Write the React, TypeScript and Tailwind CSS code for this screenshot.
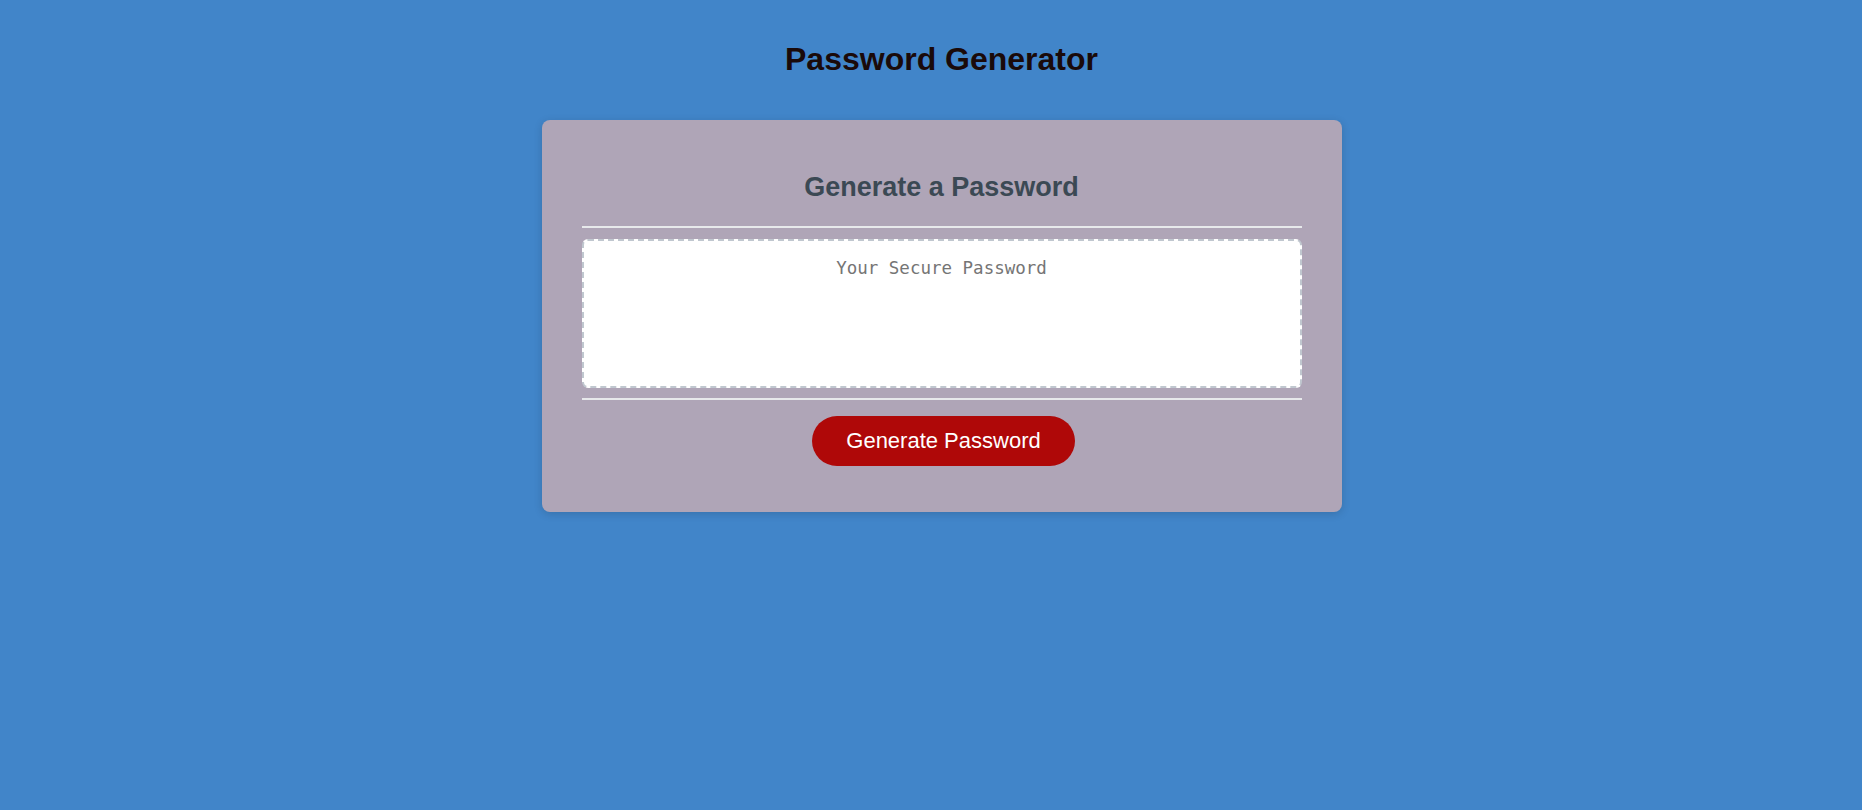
const App = () => {
  return (
    <div className="min-h-screen bg-[#4185c9] pl-[21px] pt-[41px] font-['Liberation_Sans',Arial,sans-serif]">
      <h1 className="text-center text-[32px] leading-[37px] font-bold text-[#1a0a0a]">
        Password Generator
      </h1>

      <div className="mx-auto mt-[42px] w-[800px] rounded-lg bg-[#afa5b7] px-10 pt-[52px] pb-[30px] shadow-[0_2px_8px_rgba(0,0,0,0.15)]">
        <h2 className="text-center text-[27px] leading-[31px] font-bold text-[#3b4954]">
          Generate a Password
        </h2>
        <div className="mt-[23px] h-[2px] w-full bg-[#e7e9eb]" />

        <textarea
          readOnly
          placeholder="Your Secure Password"
          className="mt-[11px] block h-[149px] w-full resize-none overflow-hidden rounded-md border-2 border-dashed border-[#c0c7cf] bg-white px-[15px] pt-[14px] text-center font-['DejaVu_Sans_Mono',monospace] text-[17.5px] text-[#333] outline-none placeholder:text-[#757575]"
        />

        <div className="mt-[10px] h-[2px] w-full bg-[#e7e9eb]" />

        {/* footer: button sits a little right of centre, like the original margins */}
        <div className="text-center">
          <button className="mt-4 mr-4 ml-5 mb-4 inline-block cursor-pointer rounded-[25px] bg-[#af0808] px-[34px] py-[14px] text-[22px] leading-[22px] text-white">
            Generate Password
          </button>
        </div>
      </div>
    </div>
  );
};

export default App;
